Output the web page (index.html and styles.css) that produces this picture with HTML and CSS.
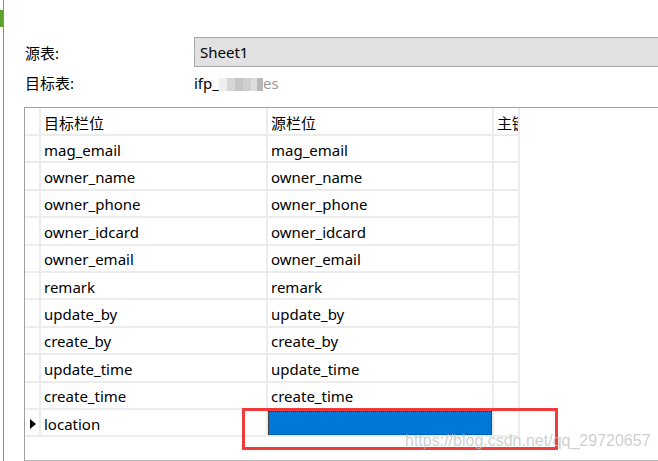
FILE: index.html
```html
<!DOCTYPE html>
<html>
<head>
<meta charset="utf-8">
<link rel="stylesheet" href="styles.css">
</head>
<body>
<div class="page">
  <div class="edge"><div class="green"></div></div>
  <div class="window">
    <div class="form">
      <div class="label">源表:</div>
      <div class="input">Sheet1</div>
      <div class="label">目标表:</div>
      <div class="value">ifp_<span class="mosaic"></span><span class="tail">es</span></div>
    </div>
    <div class="grid">
      <div class="table">
        <div class="rh head"></div><div class="c head">目标栏位</div><div class="c head">源栏位</div><div class="c head">主键</div>
        <div class="rh"></div><div class="c">mag_email</div><div class="c">mag_email</div><div class="c"></div>
        <div class="rh"></div><div class="c">owner_name</div><div class="c">owner_name</div><div class="c"></div>
        <div class="rh"></div><div class="c">owner_phone</div><div class="c">owner_phone</div><div class="c"></div>
        <div class="rh"></div><div class="c">owner_idcard</div><div class="c">owner_idcard</div><div class="c"></div>
        <div class="rh"></div><div class="c">owner_email</div><div class="c">owner_email</div><div class="c"></div>
        <div class="rh"></div><div class="c">remark</div><div class="c">remark</div><div class="c"></div>
        <div class="rh"></div><div class="c">update_by</div><div class="c">update_by</div><div class="c"></div>
        <div class="rh"></div><div class="c">create_by</div><div class="c">create_by</div><div class="c"></div>
        <div class="rh"></div><div class="c">update_time</div><div class="c">update_time</div><div class="c"></div>
        <div class="rh"></div><div class="c">create_time</div><div class="c">create_time</div><div class="c"></div>
        <div class="rh cur"><span class="arrow"></span></div><div class="c">location</div><div class="c sel"><div class="selbox"></div></div><div class="c"></div>
      </div>
    </div>
  </div>
</div>
<div class="highlight"></div>
<div class="mark">https://blog.csdn.net/qq_29720657</div>
</body>
</html>
```

FILE: styles.css
```css
html, body {
  margin: 0;
  padding: 0;
  background: #ffffff;
  width: 658px;
  height: 461px;
  overflow: hidden;
  font-family: "Noto Sans", "Noto Sans CJK SC", sans-serif;
  font-size: 15px;
  color: #000000;
}

.page {
  display: flex;
  height: 461px;
  position: relative;
}

.edge {
  width: 3px;
  padding-top: 10px;
  box-sizing: border-box;
}

.green {
  height: 17px;
  background: #5ca32e;
}

.window {
  flex: 1;
  border-left: 1px solid #8c8c8c;
  padding: 37px 0 0 20px;
  overflow: hidden;
  min-width: 0;
}

.form {
  display: grid;
  grid-template-columns: 169px 1fr;
  grid-auto-rows: 30px;
  margin-left: 1px;
}

.label,
.value {
  display: flex;
  align-items: center;
  white-space: nowrap;
  padding-top: 1px;
}

.input {
  display: flex;
  align-items: center;
  background: #e1e1e1;
  border: 1px solid #a9a9a9;
  border-right: none;
  padding-left: 5px;
  margin-right: -40px;
}

.mosaic {
  display: inline-block;
  width: 44px;
  height: 13px;
  margin-top: 4px;
  background: linear-gradient(90deg, #eeeeee 0 8px, #d6d6d6 8px 16px, #c4c4c4 16px 24px, #cfcfcf 24px 32px, #dcdcdc 32px 38px, #b8b8b8 38px 44px);
}

.tail {
  color: #9a9a9a;
}

.grid {
  margin-top: 10px;
  height: 354px;
  box-sizing: border-box;
  border-top: 1px solid #a0a0a0;
  border-left: 1px solid #a0a0a0;
  border-bottom: 1px solid #b8b8b8;
  margin-right: -40px;
}

.table {
  display: grid;
  grid-template-columns: 16px 227px 226px 26px;
  grid-template-rows: 28px;
  grid-auto-rows: 27.4px;
}

.table > div {
  box-sizing: border-box;
  border-right: 2px solid #ececec;
  border-bottom: 2px solid #ececec;
}

.c {
  display: flex;
  align-items: center;
  padding-left: 3px;
  padding-top: 2px;
  white-space: nowrap;
  overflow: hidden;
}

.rh {
  display: flex;
  align-items: center;
  justify-content: center;
}

.arrow {
  width: 0;
  height: 0;
  border-left: 6px solid #000000;
  border-top: 5px solid transparent;
  border-bottom: 5px solid transparent;
  margin-left: 1px;
  margin-top: 2px;
}

.table > .sel {
  padding: 0;
  align-items: stretch;
  border-right: 2px solid #ececec;
}

.selbox {
  flex: 1;
  background: #0078d7;
  border: 1px dotted #2a2a2a;
  margin-top: 1px;
}

.highlight {
  position: absolute;
  left: 242px;
  top: 408px;
  width: 316px;
  height: 42px;
  box-sizing: border-box;
  border: 3px solid #f23a3a;
}

.mark {
  position: absolute;
  left: 405px;
  top: 432px;
  font-family: "Liberation Sans", Arial, sans-serif;
  font-size: 16px;
  line-height: 18px;
  color: rgba(190, 190, 190, 0.75);
  white-space: nowrap;
}
```
